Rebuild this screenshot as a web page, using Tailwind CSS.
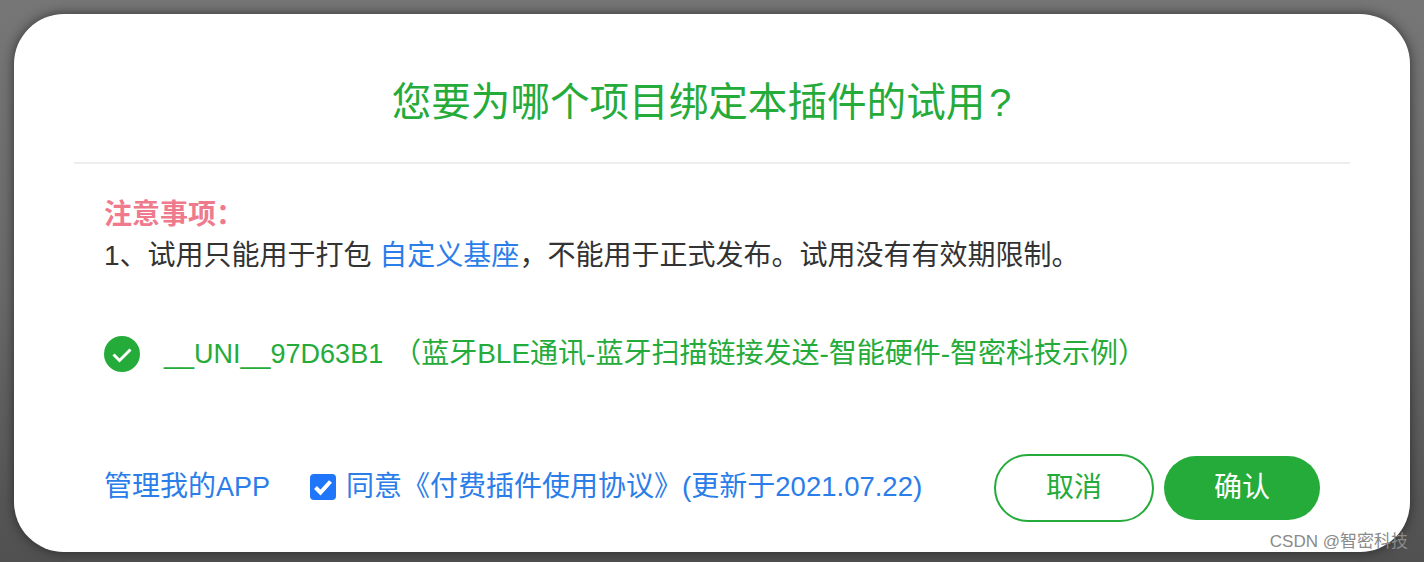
<!DOCTYPE html>
<html lang="zh">
<head>
  <meta charset="UTF-8" />
  <title>试用绑定</title>
  <script src="https://cdn.jsdelivr.net/npm/@tailwindcss/browser@4"></script>
</head>
<body class="m-0 w-[1424px] h-[562px] overflow-hidden bg-[#6e6e6e] font-['Liberation_Sans','Noto_Sans_CJK_SC',sans-serif]">
  <div class="relative h-[562px] pt-[14px] px-[14px] bg-[linear-gradient(180deg,#767676_0%,#6a6a6a_50%,#505050_100%)]">
    <div class="relative flex flex-col w-[1396px] h-[538px] bg-white rounded-[50px] shadow-[0_0_12px_rgba(30,30,30,0.75)]">
      <!-- title -->
      <h1 class="h-[150px] mx-[60px] pt-[60px] pr-[21px] border-b-2 border-[#eeeeee] text-center text-[39.6px] leading-[56px] font-normal text-[#24ab3a]">您要为哪个项目绑定本插件的试用<span class="ml-[4px]">&#x3F;</span></h1>

      <!-- notes -->
      <div class="px-[90px] pt-[30px] text-[28px] leading-[41px]">
        <p class="font-bold text-[#ee7a8c]">注意事项&#xFF1A;</p>
        <p class="text-[#333333]">1、试用只能用于打包 <span class="text-[#2b7de9]">自定义基座</span>&#xFF0C;不能用于正式发布。试用没有有效期限制。</p>
      </div>

      <!-- app row -->
      <div class="flex items-center px-[90px] mt-[58px] text-[28px] leading-[40px] text-[#24ab3a]">
        <svg class="w-9 h-9 mr-6" viewBox="0 0 36 36"><circle cx="18" cy="18" r="18" fill="#24ab3a"/><path d="M9.5 18.5l6 6 11-11" fill="none" stroke="#fff" stroke-width="3"/></svg>
        <span class="whitespace-nowrap"><span class="text-[27px] mr-[10px]">__UNI__97D63B1</span>&#xFF08;蓝牙BLE通讯-蓝牙扫描链接发送-智能硬件-智密科技示例&#xFF09;</span>
      </div>

      <!-- footer -->
      <div class="flex items-center pl-[90px] pr-[90px] mt-[80px] text-[28px] leading-[40px] text-[#2b7de9]">
        <span class="w-[167px] mb-[3px] whitespace-nowrap"><span>管理我的</span><span class="text-[27px]">APP</span></span>
        <svg class="w-[26px] h-[26px] ml-[39px] mr-[10px] mb-[3px]" viewBox="0 0 26 26"><rect width="26" height="26" rx="4" fill="#1f76fb"/><path d="M5.5 13.5l5 5 10-11" fill="none" stroke="#fff" stroke-width="4"/></svg>
        <span class="mb-[3px] whitespace-nowrap">同意《付费插件使用协议》(更新于<span class="text-[27.5px]">2021.07.22</span>)</span>
        <div class="ml-auto flex items-center gap-[10px]">
          <div class="flex items-center justify-center w-[160px] h-[68px] rounded-full border-2 border-[#24ab3a] text-[#24ab3a]">取消</div>
          <div class="flex items-center justify-center w-[156px] h-[64px] rounded-full bg-[#24ab3a] text-white">确认</div>
        </div>
      </div>

      <span class="absolute right-[2px] bottom-[-2px] text-[17px] leading-[24px] text-[#8a8a8a]">CSDN @智密科技</span>
    </div>
  </div>
</body>
</html>
